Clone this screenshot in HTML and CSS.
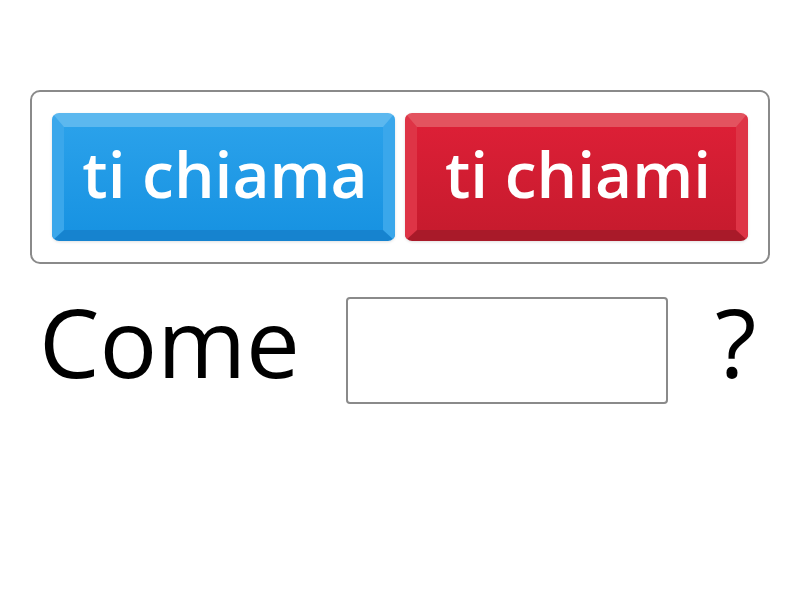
FILE: index.html
```html
<!DOCTYPE html>
<html lang="it">
<head>
<meta charset="utf-8">
<title>Come ti chiami?</title>
<link rel="stylesheet" href="styles.css">
</head>
<body>
<div class="page">
  <div class="choices">
    <div class="btn btn-blue"><span class="face">ti chiama</span></div>
    <div class="btn btn-red"><span class="face">ti chiami</span></div>
  </div>
  <div class="sentence">
    <span class="word">Come</span>
    <div class="blank"></div>
    <span class="word qmark">?</span>
  </div>
</div>
</body>
</html>
```

FILE: styles.css
```css
html, body {
  margin: 0;
  padding: 0;
  background: #ffffff;
}

.page {
  width: 800px;
  height: 600px;
  padding-top: 90px;
  box-sizing: border-box;
  font-family: "Open Sans", "Noto Sans", sans-serif;
}

.choices {
  margin-left: 30px;
  width: 740px;
  height: 174px;
  box-sizing: border-box;
  border: 2px solid #8a8a8a;
  border-radius: 10px;
  padding: 21px 20px 0 20px;
  display: flex;
  gap: 10px;
}

.btn {
  width: 343px;
  height: 128px;
  box-sizing: border-box;
  border-radius: 7px;
  border-style: solid;
  border-width: 14px 12px 11px 12px;
  display: flex;
  box-shadow: 0 1px 3px rgba(0, 0, 0, 0.12);
}

.face {
  flex: 1;
  display: flex;
  align-items: center;
  justify-content: center;
  color: #ffffff;
  font-size: 64px;
  font-weight: 600;
  line-height: 1;
  padding-bottom: 10px;
  padding-left: 3px;
  white-space: nowrap;
}

.btn-blue {
  border-color: #5cb8ef #3aa7eb #1683cf #3aa7eb;
}

.btn-blue .face {
  background: linear-gradient(#2aa1ea, #1893e2);
}

.btn-red {
  border-color: #e3535f #de3446 #a91a29 #de3446;
}

.btn-red .face {
  background: linear-gradient(#dc1f36, #c71b2e);
}

.sentence {
  margin-top: 29px;
  padding-left: 39px;
  display: flex;
  align-items: flex-start;
}

.word {
  font-size: 96px;
  line-height: 96px;
  font-weight: 400;
  color: #000000;
}

.blank {
  margin-top: 4px;
  margin-left: 46px;
  width: 322px;
  height: 107px;
  box-sizing: border-box;
  border: 2px solid #8a8a8a;
  border-radius: 4px;
  background: #ffffff;
}

.qmark {
  margin-left: 47px;
}
```
